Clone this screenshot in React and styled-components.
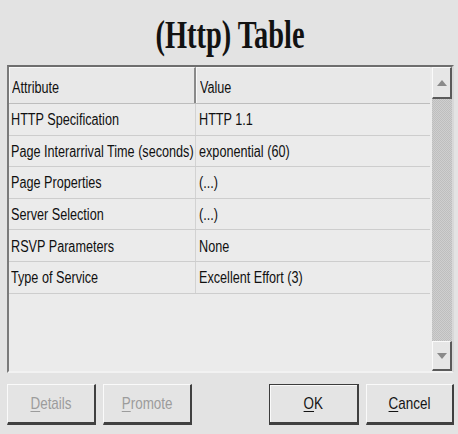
import React from "react";
import styled, { createGlobalStyle } from "styled-components";

const Global = createGlobalStyle`
  html, body { margin: 0; padding: 0; background: #e3e3e3; }
  body { width: 458px; height: 434px; overflow: hidden; font-family: "Liberation Sans", Arial, sans-serif; }
`;

const Dialog = styled.div`
  width: 458px;
  height: 434px;
  box-sizing: border-box;
  background: #e3e3e3;
  display: flex;
  flex-direction: column;
  padding: 0 4px 0 7px;
`;

const Title = styled.h1`
  margin: 0;
  height: 65px;
  display: flex;
  align-items: center;
  justify-content: center;
  font-family: "Liberation Serif", "Times New Roman", serif;
  font-weight: bold;
  font-size: 40px;
  color: #121212;
  padding-top: 3px;
  box-sizing: border-box;
`;

const Squeeze = styled.span`
  display: inline-block;
  white-space: nowrap;
  transform: scaleX(${(p) => p.$sx || 0.79});
  transform-origin: ${(p) => (p.$center ? "center" : "left")} center;
`;

const Frame = styled.div`
  height: 308px;
  box-sizing: border-box;
  border-top: 2px solid #6e6e6e;
  border-left: 2px solid #7a7a7a;
  border-right: 2px solid #d8d8d8;
  border-bottom: 2px solid #f2f2f2;
  display: flex;
  background: #ebebeb;
`;

const List = styled.div`
  flex: 1;
  display: flex;
  flex-direction: column;
  padding-right: 2px;
`;

const HeaderRow = styled.div`
  display: grid;
  grid-template-columns: 187px 1fr;
  height: 37px;
  box-sizing: border-box;
  border-bottom: 1px solid #bdbdbd;
`;

const HeaderCell = styled.div`
  display: flex;
  align-items: center;
  padding: 4px 0 0 2px;
  font-size: 16px;
  color: #101010;
  background: #e8e8e8;
  border-top: 1px solid #f8f8f8;
  border-left: 1px solid #f8f8f8;
  border-right: 2px solid #8a8a8a;
  box-sizing: border-box;
  &:last-child { border-right: none; padding-left: 3px; }
`;

const Row = styled.div`
  display: grid;
  grid-template-columns: 187px 1fr;
  height: 31.6px;
  box-sizing: border-box;
  border-bottom: 1px solid #cdcdcd;
`;

const Cell = styled.div`
  display: flex;
  align-items: center;
  padding: 2px 0 0 2px;
  font-size: 16px;
  color: #101010;
  box-sizing: border-box;
  border-right: 1px solid #d2d2d2;
  &:last-child { border-right: none; padding-left: 3px; }
`;

const ScrollBar = styled.div`
  width: 20px;
  display: flex;
  flex-direction: column;
  background-color: #c6c6c6;
  background-image: repeating-conic-gradient(#bebebe 0 25%, #cfcfcf 0 50%);
  background-size: 2px 2px;
`;

const Track = styled.div`
  flex: 1;
`;

const ArrowBtn = styled.div`
  height: ${(p) => p.$h}px;
  box-sizing: border-box;
  background: #e6e6e6;
  border-top: 1px solid #fafafa;
  border-left: 1px solid #fafafa;
  border-right: 2px solid #5a5a5a;
  border-bottom: 2px solid #5a5a5a;
  display: flex;
  align-items: center;
  justify-content: center;
`;

const Buttons = styled.div`
  display: flex;
  align-items: center;
  margin-top: 11px;
  gap: 7px;
`;

const Spacer = styled.div`
  flex: 1;
`;

const Button = styled.button`
  width: ${(p) => p.$w}px;
  height: 41px;
  box-sizing: border-box;
  background: #e4e4e4;
  font-family: "Liberation Sans", Arial, sans-serif;
  font-size: 17px;
  color: ${(p) => (p.disabled ? "#9c9c9c" : "#141414")};
  border-top: 1px solid ${(p) => (p.$default ? "#3c3c3c" : "#fafafa")};
  border-left: 1px solid ${(p) => (p.$default ? "#3c3c3c" : "#fafafa")};
  border-right: 2px solid #404040;
  border-bottom: 3px solid #404040;
  box-shadow: ${(p) => (p.$default ? "inset 1px 1px 0 #fafafa" : "none")};
  padding: 0;
  display: flex;
  align-items: center;
  justify-content: center;
  u { text-underline-offset: 2px; }
`;

const rows = [
  ["HTTP Specification", "HTTP 1.1"],
  ["Page Interarrival Time (seconds)", "exponential (60)"],
  ["Page Properties", "(...)"],
  ["Server Selection", "(...)"],
  ["RSVP Parameters", "None"],
  ["Type of Service", "Excellent Effort (3)"],
];

const Arrow = ({ up }) => (
  <svg width="10" height="6" viewBox="0 0 10 6">
    <polygon points={up ? "5,0 10,6 0,6" : "0,0 10,0 5,6"} fill="#8a8a8a" />
  </svg>
);

export default function App() {
  return (
    <>
      <Global />
      <Dialog>
        <Title>
          <Squeeze $center $sx={0.71}>(Http) Table</Squeeze>
        </Title>
        <Frame>
          <List>
            <HeaderRow>
              <HeaderCell><Squeeze>Attribute</Squeeze></HeaderCell>
              <HeaderCell><Squeeze>Value</Squeeze></HeaderCell>
            </HeaderRow>
            {rows.map(([a, v]) => (
              <Row key={a}>
                <Cell><Squeeze>{a}</Squeeze></Cell>
                <Cell><Squeeze>{v}</Squeeze></Cell>
              </Row>
            ))}
          </List>
          <ScrollBar>
            <ArrowBtn $h={32}><Arrow up /></ArrowBtn>
            <Track />
            <ArrowBtn $h={30}><Arrow /></ArrowBtn>
          </ScrollBar>
        </Frame>
        <Buttons>
          <Button $w={89} disabled><Squeeze $center><u>D</u>etails</Squeeze></Button>
          <Button $w={89} disabled><Squeeze $center><u>P</u>romote</Squeeze></Button>
          <Spacer />
          <Button $w={90} $default><Squeeze $center><u>O</u>K</Squeeze></Button>
          <Button $w={88}><Squeeze $center><u>C</u>ancel</Squeeze></Button>
        </Buttons>
      </Dialog>
    </>
  );
}
